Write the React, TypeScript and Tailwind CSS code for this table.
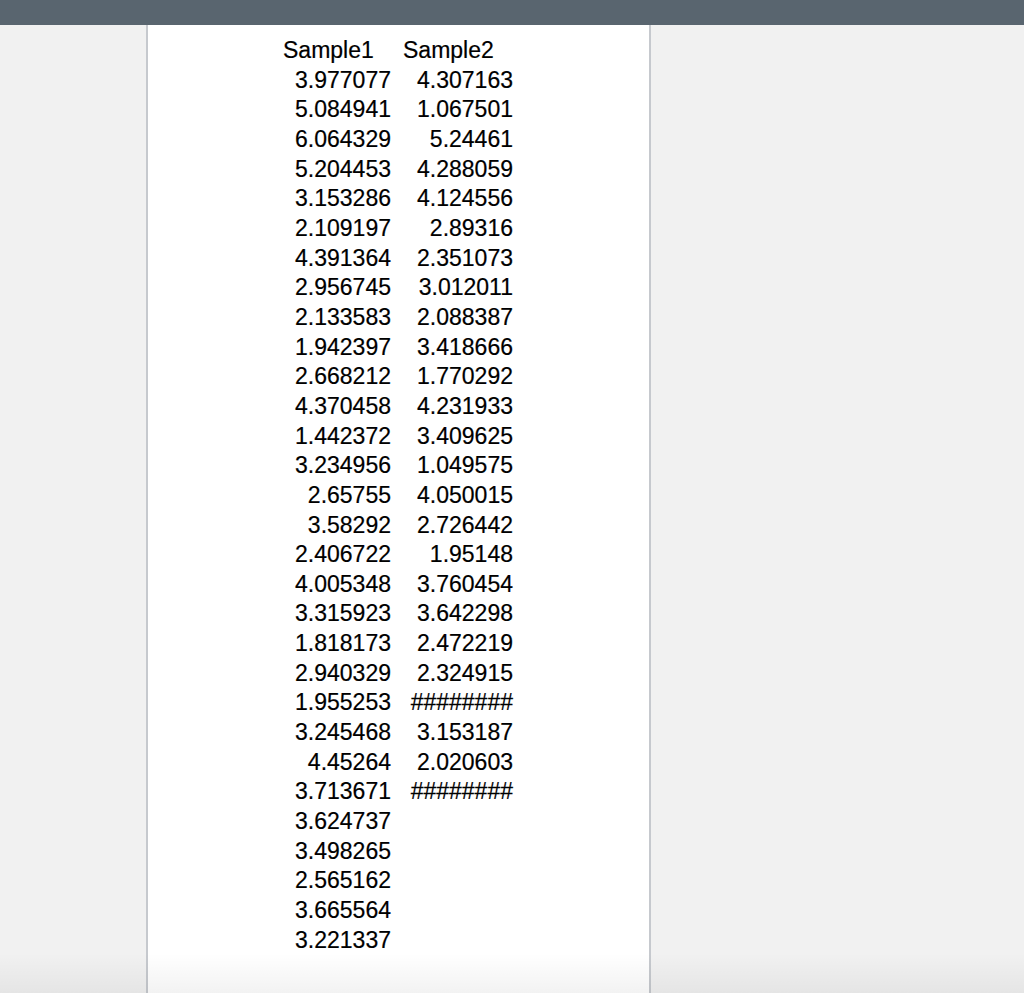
import React from 'react';

const sample1 = [
  '3.977077', '5.084941', '6.064329', '5.204453', '3.153286', '2.109197',
  '4.391364', '2.956745', '2.133583', '1.942397', '2.668212', '4.370458',
  '1.442372', '3.234956', '2.65755', '3.58292', '2.406722', '4.005348',
  '3.315923', '1.818173', '2.940329', '1.955253', '3.245468', '4.45264',
  '3.713671', '3.624737', '3.498265', '2.565162', '3.665564', '3.221337',
];

const sample2 = [
  '4.307163', '1.067501', '5.24461', '4.288059', '4.124556', '2.89316',
  '2.351073', '3.012011', '2.088387', '3.418666', '1.770292', '4.231933',
  '3.409625', '1.049575', '4.050015', '2.726442', '1.95148', '3.760454',
  '3.642298', '2.472219', '2.324915', '########', '3.153187', '2.020603',
  '########',
];

export default function App() {
  return (
    <div className="relative h-[993px] w-[1024px] overflow-hidden bg-[#f1f1f1] font-['Liberation_Sans',Arial,sans-serif]">
      {/* top bar */}
      <div className="h-[25px] bg-[#59656f]" />

      <div className="flex h-[968px]">
        <div className="w-[146px] flex-shrink-0" />

        {/* sheet panel */}
        <div className="w-[505px] flex-shrink-0 border-x-2 border-[#c6c9ce] bg-white pl-[135px] pt-[11px]">
          <div className="grid grid-cols-[108px_110px] gap-x-[12px] text-[23px] leading-[29.66px] text-black [-webkit-text-stroke:0.2px_black]">
            <div className="text-left">Sample1</div>
            <div className="text-left">Sample2</div>
            {sample1.map((v, i) => (
              <React.Fragment key={i}>
                <div className="text-right">{v}</div>
                <div className="text-right">{sample2[i] ?? ''}</div>
              </React.Fragment>
            ))}
          </div>
        </div>

        <div className="flex-1" />
      </div>

      {/* bottom fade */}
      <div className="pointer-events-none absolute inset-x-0 bottom-0 h-[40px] bg-gradient-to-b from-transparent to-black/[0.05]" />
    </div>
  );
}
